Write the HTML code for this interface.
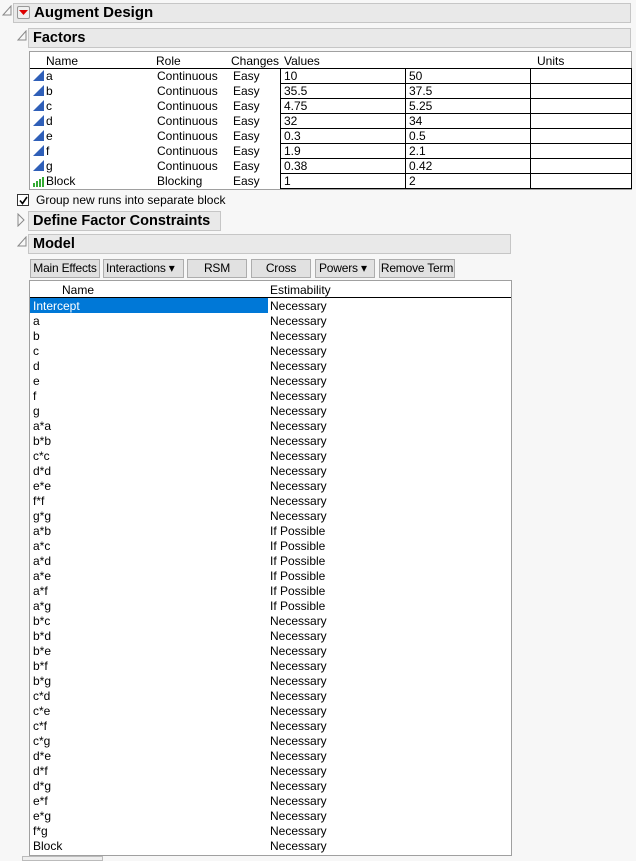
<!DOCTYPE html>
<html><head><style>
*{margin:0;padding:0;box-sizing:border-box}
body{width:636px;height:859px;background:#f7f7f7;font-family:"Liberation Sans",Arial,sans-serif;font-size:12px;color:#000;position:relative;overflow:hidden}
.a{position:absolute;white-space:nowrap}
.hdr{position:absolute;background:#e9e9e9;border:1px solid #c6c6c6;font-weight:bold;font-size:14.5px;padding-left:4px;line-height:18px;white-space:nowrap}
.btn{position:absolute;top:259px;height:19px;background:#e1e1e1;border:1px solid #adadad;font-size:12px;line-height:17px;text-align:center;white-space:nowrap;overflow:hidden;letter-spacing:-0.2px}
.cell{position:absolute;height:16px;border:1px solid #000;background:#fff;line-height:15px;padding-left:3px}
</style></head><body>
<svg class="a" style="left:2px;top:5px" width="10" height="12"><path d="M9 1 L9 10 L1 10 Z" fill="none" stroke="#888"/></svg>
<div class="hdr" style="left:13px;top:3px;width:618px;height:20px;padding-left:20px;font-size:15px">Augment Design</div>
<div class="a" style="left:17px;top:6px;width:13px;height:13px;border:1px solid #999;background:#f0f0f0;border-radius:2px"></div>
<svg class="a" style="left:19px;top:10px" width="9" height="6"><path d="M0 0 L9 0 L4.5 5 Z" fill="#d00"/></svg>
<svg class="a" style="left:17px;top:30px" width="10" height="12"><path d="M9 1 L9 10 L1 10 Z" fill="none" stroke="#888"/></svg>
<div class="hdr" style="left:28px;top:28px;width:603px;height:20px">Factors</div>
<div class="a" style="left:29px;top:51px;width:603px;height:139px;background:#fff;border:1px solid #a0a0a0"></div>
<div class="a" style="left:30px;top:68px;width:601px;height:1px;background:#000"></div>
<div class="a" style="left:46px;top:54px">Name</div>
<div class="a" style="left:156px;top:54px">Role</div>
<div class="a" style="left:231px;top:54px">Changes</div>
<div class="a" style="left:284px;top:54px">Values</div>
<div class="a" style="left:537px;top:54px">Units</div>
<div id="frows"></div>
<div class="a" style="left:17px;top:194px;width:12px;height:12px;border:1px solid #333;background:#fff"></div>
<svg class="a" style="left:18px;top:195px" width="11" height="11"><path d="M2 5.5 L4.5 8.5 L9 2" fill="none" stroke="#000" stroke-width="1.6"/></svg>
<div class="a" style="left:36px;top:193px">Group new runs into separate block</div>
<svg class="a" style="left:17px;top:213px" width="9" height="14"><path d="M1 1 L7 7 L1 13 Z" fill="none" stroke="#888"/></svg>
<div class="hdr" style="left:28px;top:211px;width:193px;height:20px">Define Factor Constraints</div>
<svg class="a" style="left:17px;top:236px" width="10" height="12"><path d="M9 1 L9 10 L1 10 Z" fill="none" stroke="#888"/></svg>
<div class="hdr" style="left:28px;top:234px;width:483px;height:20px">Model</div>
<div class="btn" style="left:30px;width:70px">Main Effects</div>
<div class="btn" style="left:103px;width:81px;text-align:left;padding-left:2px">Interactions ▾</div>
<div class="btn" style="left:187px;width:60px">RSM</div>
<div class="btn" style="left:251px;width:60px">Cross</div>
<div class="btn" style="left:315px;width:60px;text-align:left;padding-left:3px">Powers ▾</div>
<div class="btn" style="left:379px;width:76px">Remove Term</div>
<div class="a" style="left:29px;top:280px;width:483px;height:576px;background:#fff;border:1px solid #a0a0a0"></div>
<div class="a" style="left:30px;top:297px;width:481px;height:1px;background:#000"></div>
<div class="a" style="left:62px;top:283px">Name</div>
<div class="a" style="left:270px;top:283px">Estimability</div>
<div class="a" style="left:30px;top:298px;width:238px;height:15px;background:#0078d7"></div>
<div id="mrows"></div>
<div class="a" style="left:22px;top:856px;width:81px;height:5px;border:1px solid #bbb;background:#eee"></div>
<script>
var f=[["a","10","50"],["b","35.5","37.5"],["c","4.75","5.25"],["d","32","34"],["e","0.3","0.5"],["f","1.9","2.1"],["g","0.38","0.42"],["Block","1","2"]];
var h="";
f.forEach(function(r,i){var y=68+i*15;var blk=r[0]=="Block";
h+=blk?'<svg class="a" style="left:33px;top:'+(y+3)+'px" width="12" height="11"><rect x="0" y="7" width="2" height="4" fill="#3a3"/><rect x="3" y="5" width="2" height="6" fill="#3a3"/><rect x="6" y="3" width="2" height="8" fill="#3a3"/><rect x="9" y="1" width="2" height="10" fill="#3a3"/></svg>'
:'<svg class="a" style="left:33px;top:'+(y+2)+'px" width="12" height="12"><path d="M0 11 L11 0 L11 11 Z" fill="#2f5fb8"/></svg>';
h+='<div class="a" style="left:46px;top:'+(y+1)+'px">'+r[0]+'</div>';
h+='<div class="a" style="left:157px;top:'+(y+1)+'px">'+(blk?"Blocking":"Continuous")+'</div>';
h+='<div class="a" style="left:233px;top:'+(y+1)+'px">Easy</div>';
h+='<div class="cell" style="left:280px;top:'+y+'px;width:126px">'+r[1]+'</div>';
h+='<div class="cell" style="left:405px;top:'+y+'px;width:126px">'+r[2]+'</div>';
h+='<div class="cell" style="left:530px;top:'+y+'px;width:102px"></div>';});
document.getElementById("frows").innerHTML=h;
var m=["Intercept","a","b","c","d","e","f","g","a*a","b*b","c*c","d*d","e*e","f*f","g*g","a*b","a*c","a*d","a*e","a*f","a*g","b*c","b*d","b*e","b*f","b*g","c*d","c*e","c*f","c*g","d*e","d*f","d*g","e*f","e*g","f*g","Block"];
h="";
m.forEach(function(n,i){var y=299+i*15;var e=(i>=15&&i<=20)?"If Possible":"Necessary";
h+='<div class="a" style="left:33px;top:'+y+'px;'+(i==0?'color:#fff':'')+'">'+n+'</div>';
h+='<div class="a" style="left:270px;top:'+y+'px">'+e+'</div>';});
document.getElementById("mrows").innerHTML=h;
</script>
</body></html>
